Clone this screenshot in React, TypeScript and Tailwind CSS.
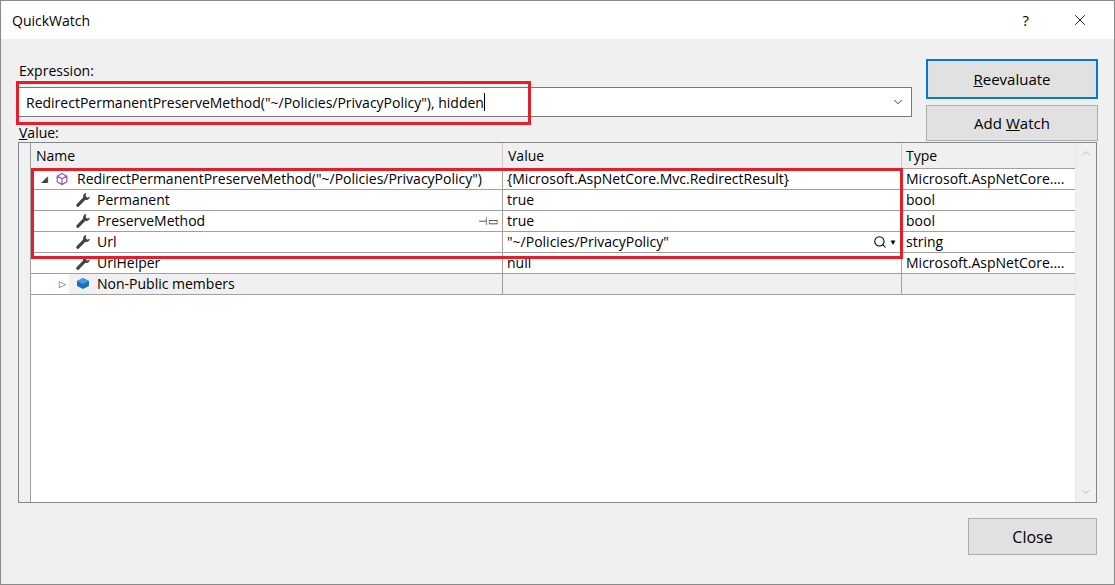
import React from "react";
import { X, ChevronDown, ChevronUp, Search } from "lucide-react";

const Wrench = () => (
  <svg width="16" height="16" viewBox="0 0 16 16" className="shrink-0">
    <path
      d="M11.5 1a3.5 3.5 0 0 0-3.3 4.6L1.6 12.2a1.3 1.3 0 0 0 0 1.9l.3.3a1.3 1.3 0 0 0 1.9 0l6.6-6.6A3.5 3.5 0 0 0 15 4.5l-2.2 1.2-2-1.2V2.2z"
      fill="#424242"
    />
  </svg>
);

const Cube = () => (
  <svg width="14" height="14" viewBox="0 0 14 14" className="shrink-0">
    <path d="M7 1.5l4.8 2.6v5.8L7 12.5 2.2 9.9V4.1z M2.2 4.1L7 6.7l4.8-2.6 M7 6.7v5.8" fill="none" stroke="#9b59b6" strokeWidth="1.2" />
  </svg>
);

const BlueBox = () => (
  <svg width="16" height="16" viewBox="0 0 16 16" className="shrink-0">
    <path d="M8 2l6 3v5l-6 3-6-3V5z" fill="#1e6fb8" />
    <path d="M2 5l6 3 6-3-6-3z" fill="#4a9ae0" />
  </svg>
);

type Row = { indent: number; icon: React.ReactNode; name: string; value: string; type: string; expander?: string; pin?: boolean; search?: boolean; gray?: boolean };

const rows: Row[] = [
  { indent: 0, expander: "◢", icon: <Cube />, name: 'RedirectPermanentPreserveMethod("~/Policies/PrivacyPolicy")', value: "{Microsoft.AspNetCore.Mvc.RedirectResult}", type: "Microsoft.AspNetCore...." },
  { indent: 1, icon: <Wrench />, name: "Permanent", value: "true", type: "bool" },
  { indent: 1, icon: <Wrench />, name: "PreserveMethod", value: "true", type: "bool", pin: true },
  { indent: 1, icon: <Wrench />, name: "Url", value: '"~/Policies/PrivacyPolicy"', type: "string", search: true },
  { indent: 1, icon: <Wrench />, name: "UrlHelper", value: "null", type: "Microsoft.AspNetCore...." },
  { indent: 1, expander: "▷", icon: <BlueBox />, name: "Non-Public members", value: "", type: "", gray: true },
];

export default function App() {
  return (
    <div className="w-[1115px] h-[585px] bg-[#f0f0f0] border border-[#8a8a8a] text-[14px] text-black overflow-hidden relative" style={{ fontFamily: '"Open Sans", "Noto Sans", sans-serif' }}>
      <div className="h-[38px] bg-white flex items-center pl-[11px]">
        <span className="text-[14px]">QuickWatch</span>
        <span className="ml-auto mr-[42px] text-[15px]">?</span>
        <X className="w-[18px] h-[18px] mr-[25px]" strokeWidth={1.2} />
      </div>
      <div className="flex px-[16px] pt-[20px] gap-[14px]">
        <div className="flex-1 relative">
          <div className="leading-[16px] pl-[2px] mt-[4px]">Expression:</div>
          <div className="mt-[8px] h-[30px] bg-white border border-[#7a7a7a] flex items-center pl-[8px] pr-[6px]">
            <span className="text-[14px]">RedirectPermanentPreserveMethod("~/Policies/PrivacyPolicy"), hidden</span>
            <span className="w-px h-[18px] bg-black" />
            <ChevronDown className="ml-auto w-[14px] h-[14px]" strokeWidth={1.3} />
          </div>
          <div className="absolute left-[-1px] top-[22px] w-[515px] h-[44px] border-[3px] border-[#e3202a]" />
          <div className="leading-[16px] pl-[2px] mt-[8px]"><u>V</u>alue:</div>
        </div>
        <div className="w-[172px] flex flex-col gap-[6px]">
          <div className="h-[40px] bg-[#e1e1e1] border-2 border-[#0078d7] flex items-center justify-center text-[15px]"><u>R</u>eevaluate</div>
          <div className="h-[36px] bg-[#e1e1e1] border border-[#adadad] flex items-center justify-center text-[15px]">Add <u className="ml-1">W</u>atch</div>
        </div>
      </div>
      <div className="mx-[17px] mt-[1px] h-[361px] bg-white border border-[#828790] flex relative">
        <div className="w-[12px] bg-[#f0f0f0] border-r border-[#a0a0a0]" />
        <div className="flex-1 flex flex-col">
          <div className="h-[26px] flex border-b border-[#a0a0a0] bg-[#f0f0f0]">
            <div className="w-[472px] pl-[5px] flex items-center border-r border-[#c8c8c8]">Name</div>
            <div className="w-[399px] pl-[5px] flex items-center border-r border-[#c8c8c8]">Value</div>
            <div className="flex-1 pl-[4px] flex items-center">Type</div>
          </div>
          {rows.map((r, i) => (
            <div key={i} className="h-[21px] flex border-b border-[#a0a0a0] leading-[20px]">
              <div className="w-[472px] flex items-center border-r border-[#a0a0a0] relative">
                <div className={`flex items-center h-full ${r.indent ? "pl-[24px]" : "pl-[6px]"}`}>
                  <span className="w-[14px] text-[9px] text-[#444] inline-flex justify-center">{r.expander ?? ""}</span>
                </div>
                <div className={`flex items-center gap-[6px] h-full flex-1 ${r.indent ? "pl-[6px]" : "pl-[4px]"} ${r.gray ? "bg-[#f0f0f0]" : ""}`}>
                  {r.icon}
                  <span className={r.indent ? "" : "ml-[2px]"}>{r.name}</span>
                </div>
                {r.pin && <span className="absolute right-[4px] text-[11px] text-[#333]">⊣▭</span>}
              </div>
              <div className={`w-[399px] pl-[4px] flex items-center border-r border-[#a0a0a0] ${r.gray ? "bg-[#f0f0f0]" : ""}`}>
                {r.value}
                {r.search && (
                  <span className="ml-auto mr-[4px] flex items-center gap-[2px]">
                    <Search className="w-[14px] h-[14px]" strokeWidth={1.8} />
                    <span className="text-[8px]">▼</span>
                  </span>
                )}
              </div>
              <div className={`flex-1 pl-[4px] flex items-center ${r.gray ? "bg-[#f0f0f0]" : ""}`}>{r.type}</div>
            </div>
          ))}
        </div>
        <div className="w-[21px] border-l border-[#e6e6e6] bg-[#f0f0f0] flex flex-col items-center justify-between py-[4px]">
          <ChevronUp className="w-[12px] h-[12px] text-[#c0c0c0]" />
          <ChevronDown className="w-[12px] h-[12px] text-[#c0c0c0]" />
        </div>
        <div className="absolute left-[12px] top-[25px] w-[872px] h-[91px] border-[3px] border-[#e3202a]" />
      </div>
      <div className="flex justify-end pr-[17px] pt-[15px]">
        <div className="w-[129px] h-[37px] bg-[#e1e1e1] border border-[#adadad] flex items-center justify-center text-[16px]">Close</div>
      </div>
    </div>
  );
}
